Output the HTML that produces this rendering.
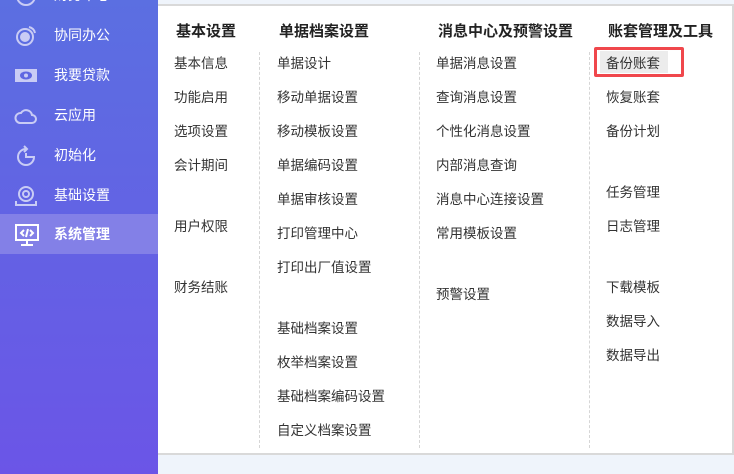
<!DOCTYPE html>
<html><head><meta charset="utf-8"><style>
*{margin:0;padding:0;box-sizing:border-box}
body{width:734px;height:474px;overflow:hidden;background:#eff4fb;font-family:"Liberation Sans","Noto Sans CJK SC",sans-serif;position:relative}
.side{position:absolute;left:0;top:0;width:158px;height:474px;background:linear-gradient(#5b6fe1,#6b55e7);overflow:hidden}
.it{position:absolute;left:0;width:158px;height:40px;color:#fff;font-size:14px;line-height:40px;padding-left:54px}
.it svg{position:absolute;left:14px;top:9px}
.act{background:#8380e7;font-weight:bold}
.panel{position:absolute;left:158px;top:4px;width:576px;height:451px;background:#fff;border-top:2px solid #d9d9d9;border-right:2px solid #d9d9d9;border-bottom:2px solid #d9d9d9}
.h{position:absolute;top:14px;font-size:15px;font-weight:bold;color:#222}
.t{position:absolute;font-size:13.5px;color:#333;white-space:nowrap}
.d{position:absolute;top:46px;height:396px;border-left:1px dashed #d6d6d6}
</style></head><body>
<div class="side">
<div class="it" style="top:-25px"><svg width="24" height="24" viewBox="0 0 24 24" fill="none" stroke="#c9ccf5" stroke-width="2"><circle cx="12" cy="12" r="9"/></svg>财务中心</div>
<div class="it" style="top:15px"><svg width="24" height="24" viewBox="0 0 24 24" fill="none" stroke="#c9ccf5" stroke-width="2"><circle cx="11" cy="13" r="8"/><circle cx="11" cy="13" r="4" fill="#c9ccf5"/><path d="M15 3a8 8 0 0 1 6 6"/></svg>协同办公</div>
<div class="it" style="top:55px"><svg width="24" height="24" viewBox="0 0 24 24"><rect x="1" y="5" width="22" height="13" fill="#c9ccf5"/><ellipse cx="12" cy="11.5" rx="6" ry="4" fill="#5f67e2"/><circle cx="12" cy="11.5" r="2" fill="#c9ccf5"/></svg>我要贷款</div>
<div class="it" style="top:95px"><svg width="24" height="24" viewBox="0 0 24 24" fill="none" stroke="#c9ccf5" stroke-width="2"><path d="M6 19h12a4 4 0 0 0 0-8 6 6 0 0 0-11-2 5 5 0 0 0-1 10z"/></svg>云应用</div>
<div class="it" style="top:135px"><svg width="24" height="24" viewBox="0 0 24 24" fill="none" stroke="#c9ccf5" stroke-width="2"><path d="M12 5a8 8 0 1 0 8 8h-8V9"/><path d="M10 2l3 3-3 3"/></svg>初始化</div>
<div class="it" style="top:175px"><svg width="24" height="24" viewBox="0 0 24 24" fill="none" stroke="#c9ccf5" stroke-width="2"><circle cx="12" cy="10" r="7"/><circle cx="12" cy="10" r="3"/><path d="M2 17v4h20v-4"/></svg>基础设置</div>
<div class="it act" style="top:214px"><svg width="26" height="24" viewBox="0 0 26 24" fill="none" stroke="#fff" stroke-width="2"><rect x="2" y="2" width="22" height="15"/><path d="M13 17v4M7 22h12M10 7l-3 3 3 3M16 7l3 3-3 3M14 6l-2 8"/></svg>系统管理</div>
</div>
<div class="panel">
<div class="d" style="left:101px"></div><div class="d" style="left:261px"></div><div class="d" style="left:431px"></div>
<div class="h" style="left:18px">基本设置</div>
<div class="h" style="left:121px">单据档案设置</div>
<div class="h" style="left:280px">消息中心及预警设置</div>
<div class="h" style="left:450px">账套管理及工具</div>
</div>
<div style="position:absolute;left:594px;top:47px;width:90px;height:30px;border:3px solid #f0474c;border-radius:2px"></div>
<div style="position:absolute;left:600px;top:51px;width:68px;height:22px;background:#ececec"></div>
<div class="t" style="left:174px;top:52px">基本信息</div>
<div class="t" style="left:174px;top:86px">功能启用</div>
<div class="t" style="left:174px;top:120px">选项设置</div>
<div class="t" style="left:174px;top:154px">会计期间</div>
<div class="t" style="left:174px;top:215px">用户权限</div>
<div class="t" style="left:174px;top:276px">财务结账</div>
<div class="t" style="left:277px;top:52px">单据设计</div>
<div class="t" style="left:277px;top:86px">移动单据设置</div>
<div class="t" style="left:277px;top:120px">移动模板设置</div>
<div class="t" style="left:277px;top:154px">单据编码设置</div>
<div class="t" style="left:277px;top:188px">单据审核设置</div>
<div class="t" style="left:277px;top:222px">打印管理中心</div>
<div class="t" style="left:277px;top:256px">打印出厂值设置</div>
<div class="t" style="left:277px;top:317px">基础档案设置</div>
<div class="t" style="left:277px;top:351px">枚举档案设置</div>
<div class="t" style="left:277px;top:385px">基础档案编码设置</div>
<div class="t" style="left:277px;top:419px">自定义档案设置</div>
<div class="t" style="left:436px;top:52px">单据消息设置</div>
<div class="t" style="left:436px;top:86px">查询消息设置</div>
<div class="t" style="left:436px;top:120px">个性化消息设置</div>
<div class="t" style="left:436px;top:154px">内部消息查询</div>
<div class="t" style="left:436px;top:188px">消息中心连接设置</div>
<div class="t" style="left:436px;top:222px">常用模板设置</div>
<div class="t" style="left:436px;top:283px">预警设置</div>
<div class="t" style="left:606px;top:52px">备份账套</div>
<div class="t" style="left:606px;top:86px">恢复账套</div>
<div class="t" style="left:606px;top:120px">备份计划</div>
<div class="t" style="left:606px;top:181px">任务管理</div>
<div class="t" style="left:606px;top:215px">日志管理</div>
<div class="t" style="left:606px;top:276px">下载模板</div>
<div class="t" style="left:606px;top:310px">数据导入</div>
<div class="t" style="left:606px;top:344px">数据导出</div>
</body></html>
